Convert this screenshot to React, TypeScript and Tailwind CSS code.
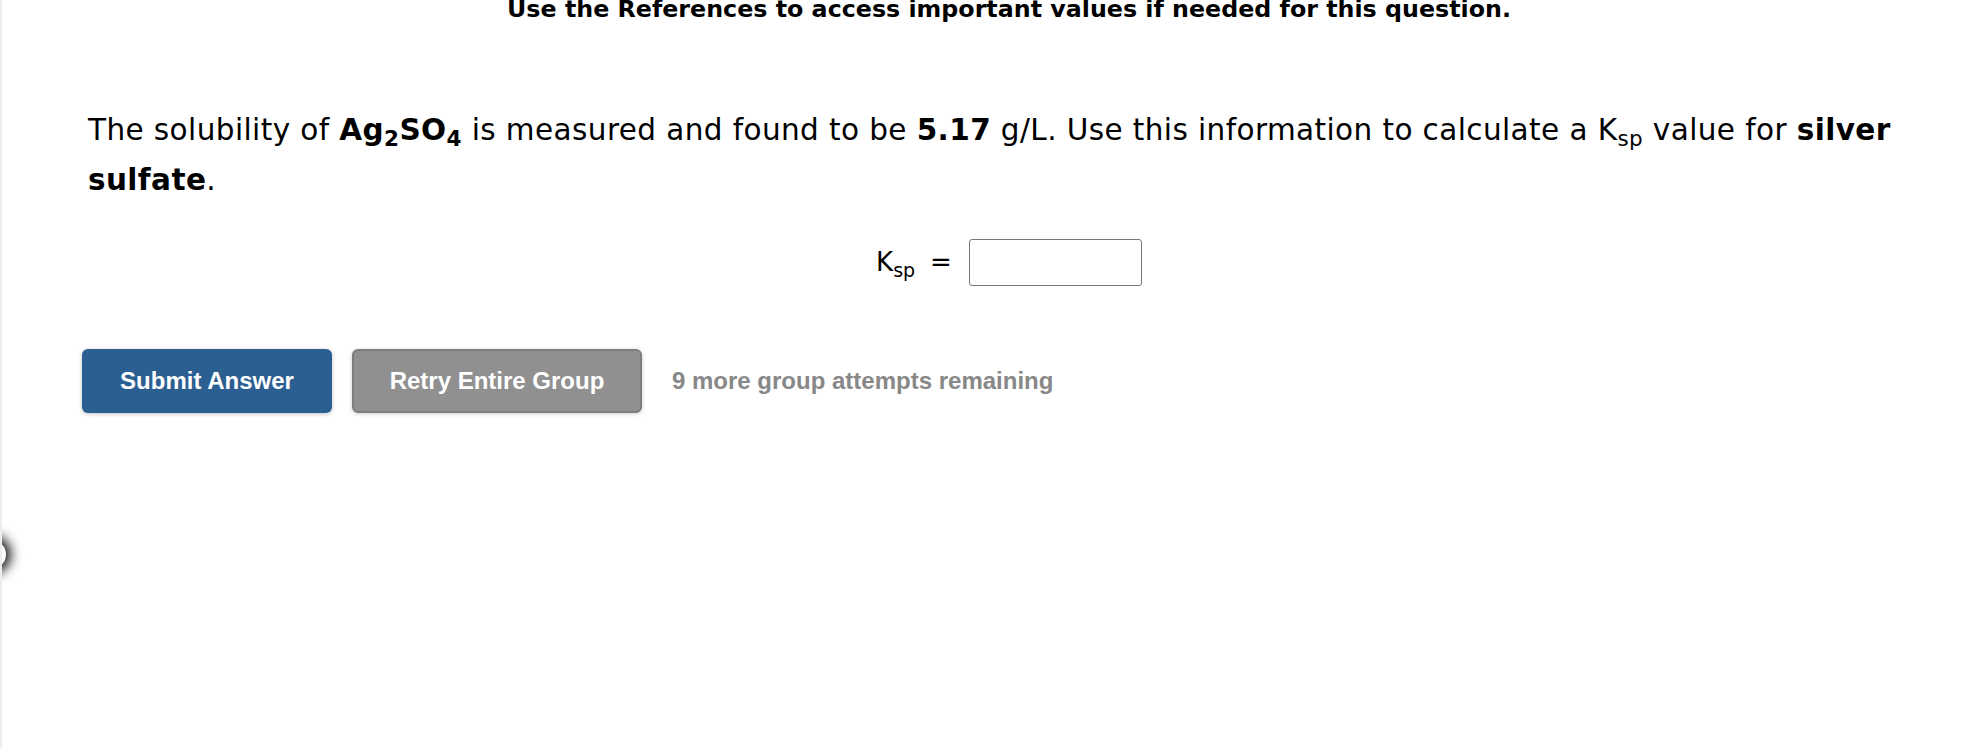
import React from "react";

export default function App() {
  const verdana = { fontFamily: '"DejaVu Sans", Verdana, sans-serif' };
  return (
    <div className="relative w-full h-[748px] bg-white overflow-hidden border-l-2 border-[#eeeeee]">
      <div className="absolute left-[-25px] top-[540px] w-[29px] h-[29px] rounded-full bg-white shadow-[0_0_12px_5px_rgba(0,0,0,0.9)]" />
      <div className="pl-[34px]">
        <div
          className="text-center font-bold text-[23.75px] leading-[23.75px] text-black mt-[-2px]"
          style={verdana}
        >
          Use the References to access important values if needed for this question.
        </div>
        <div className="px-[52px] pt-[83px]">
          <p className="text-[29.5px] tracking-[0.4px] leading-[50px] text-black" style={verdana}>
            The solubility of{" "}
            <b>
              Ag<sub className="text-[21.5px] relative top-[6px] align-baseline">2</sub>SO
              <sub className="text-[21.5px] relative top-[6px] align-baseline">4</sub>
            </b>{" "}
            is measured and found to be <b>5.17</b> g/L. Use this information to calculate a K
            <sub className="text-[21.5px] relative top-[6px] align-baseline">sp</sub> value for{" "}
            <b>silver sulfate</b>.
          </p>
        </div>
        <div className="flex justify-center items-center mt-[34px]" style={verdana}>
          <span className="text-[26px] text-black">
            K<sub className="text-[19px] relative top-[6px] align-baseline">sp</sub>
          </span>
          <span className="text-[26px] text-black ml-[15px] mr-[17px]">=</span>
          <div className="w-[173px] h-[47px] border-[1.5px] border-[#777777] rounded-[3px] bg-white" />
        </div>
        <div
          className="flex items-center ml-[46px] mt-[63px]"
          style={{ fontFamily: '"Liberation Sans", Arial, sans-serif' }}
        >
          <button className="h-[64px] w-[250px] rounded-[6px] bg-[#2b5e91] text-white font-bold text-[24px] shadow-[0_1px_4px_rgba(0,0,0,0.25)]">
            Submit Answer
          </button>
          <button className="h-[64px] w-[290px] ml-[20px] rounded-[6px] bg-[#909090] border-2 border-[#7d7d7d] text-white font-bold text-[24px] shadow-[0_1px_4px_rgba(0,0,0,0.2)]">
            Retry Entire Group
          </button>
          <span className="ml-[30px] text-[24px] font-bold text-[#888888]">
            9 more group attempts remaining
          </span>
        </div>
      </div>
    </div>
  );
}
